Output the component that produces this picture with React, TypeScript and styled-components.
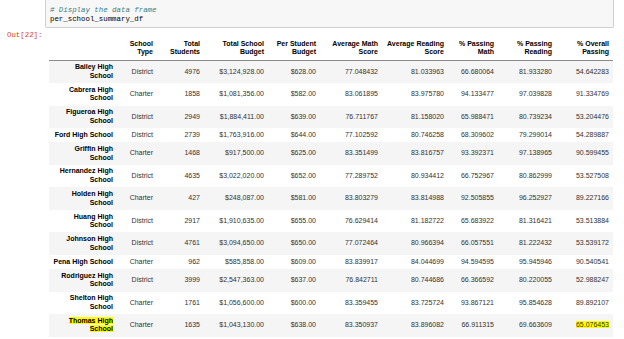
import styled, { createGlobalStyle } from 'styled-components';

const GlobalStyle = createGlobalStyle`
  html, body {
    margin: 0;
    padding: 0;
    background: #ffffff;
  }
`;

type School = {
  name: string;
  type: string;
  students: number;
  budget: string;
  perStudent: string;
  math: string;
  reading: string;
  passMath: string;
  passReading: string;
  overall: string;
  highlight?: boolean;
};

const columns = [
  { label: 'School\nType', width: 40 },
  { label: 'Total\nStudents', width: 47 },
  { label: 'Total School\nBudget', width: 64 },
  { label: 'Per Student\nBudget', width: 52 },
  { label: 'Average Math\nScore', width: 62 },
  { label: 'Average Reading\nScore', width: 66 },
  { label: '% Passing\nMath', width: 50 },
  { label: '% Passing\nReading', width: 58 },
  { label: '% Overall\nPassing', width: 57 },
];

const schools: School[] = [
  { name: 'Bailey High\nSchool', type: 'District', students: 4976, budget: '$3,124,928.00', perStudent: '$628.00', math: '77.048432', reading: '81.033963', passMath: '66.680064', passReading: '81.933280', overall: '54.642283' },
  { name: 'Cabrera High\nSchool', type: 'Charter', students: 1858, budget: '$1,081,356.00', perStudent: '$582.00', math: '83.061895', reading: '83.975780', passMath: '94.133477', passReading: '97.039828', overall: '91.334769' },
  { name: 'Figueroa High\nSchool', type: 'District', students: 2949, budget: '$1,884,411.00', perStudent: '$639.00', math: '76.711767', reading: '81.158020', passMath: '65.988471', passReading: '80.739234', overall: '53.204476' },
  { name: 'Ford High School', type: 'District', students: 2739, budget: '$1,763,916.00', perStudent: '$644.00', math: '77.102592', reading: '80.746258', passMath: '68.309602', passReading: '79.299014', overall: '54.289887' },
  { name: 'Griffin High\nSchool', type: 'Charter', students: 1468, budget: '$917,500.00', perStudent: '$625.00', math: '83.351499', reading: '83.816757', passMath: '93.392371', passReading: '97.138965', overall: '90.599455' },
  { name: 'Hernandez High\nSchool', type: 'District', students: 4635, budget: '$3,022,020.00', perStudent: '$652.00', math: '77.289752', reading: '80.934412', passMath: '66.752967', passReading: '80.862999', overall: '53.527508' },
  { name: 'Holden High\nSchool', type: 'Charter', students: 427, budget: '$248,087.00', perStudent: '$581.00', math: '83.803279', reading: '83.814988', passMath: '92.505855', passReading: '96.252927', overall: '89.227166' },
  { name: 'Huang High\nSchool', type: 'District', students: 2917, budget: '$1,910,635.00', perStudent: '$655.00', math: '76.629414', reading: '81.182722', passMath: '65.683922', passReading: '81.316421', overall: '53.513884' },
  { name: 'Johnson High\nSchool', type: 'District', students: 4761, budget: '$3,094,650.00', perStudent: '$650.00', math: '77.072464', reading: '80.966394', passMath: '66.057551', passReading: '81.222432', overall: '53.539172' },
  { name: 'Pena High School', type: 'Charter', students: 962, budget: '$585,858.00', perStudent: '$609.00', math: '83.839917', reading: '84.044699', passMath: '94.594595', passReading: '95.945946', overall: '90.540541' },
  { name: 'Rodriguez High\nSchool', type: 'District', students: 3999, budget: '$2,547,363.00', perStudent: '$637.00', math: '76.842711', reading: '80.744686', passMath: '66.366592', passReading: '80.220055', overall: '52.988247' },
  { name: 'Shelton High\nSchool', type: 'Charter', students: 1761, budget: '$1,056,600.00', perStudent: '$600.00', math: '83.359455', reading: '83.725724', passMath: '93.867121', passReading: '95.854628', overall: '89.892107' },
  { name: 'Thomas High\nSchool', type: 'Charter', students: 1635, budget: '$1,043,130.00', perStudent: '$638.00', math: '83.350937', reading: '83.896082', passMath: '66.911315', passReading: '69.663609', overall: '65.076453', highlight: true },
];

const Notebook = styled.div`
  width: 624px;
  height: 339px;
  overflow: hidden;
  font-family: 'Liberation Sans', Arial, sans-serif;
`;

const InputArea = styled.div`
  margin: 0 10px 0 45px;
  padding: 5.5px 4px 3px;
  background: #f7f7f7;
  border: 1px solid #cfcfcf;
  border-top: 0;
  border-radius: 0 0 2px 2px;
`;

const CodeLine = styled.div<{ $comment?: boolean }>`
  font-family: 'Liberation Mono', 'DejaVu Sans Mono', monospace;
  font-size: 7.4px;
  line-height: 9px;
  white-space: pre;
  color: ${p => (p.$comment ? '#408080' : '#000000')};
  font-style: ${p => (p.$comment ? 'italic' : 'normal')};
`;

const OutputArea = styled.div`
  display: flex;
  padding-top: 3px;
`;

const Prompt = styled.div`
  width: 49px;
  flex: none;
  padding-left: 7px;
  box-sizing: border-box;
  font-family: 'Liberation Mono', 'DejaVu Sans Mono', monospace;
  font-size: 7.4px;
  line-height: 9px;
  color: #d84315;
`;

const Table = styled.table`
  margin-top: 6.5px;
  border-collapse: collapse;
  border-spacing: 0;
  table-layout: fixed;
  width: 563.5px;
  font-size: 7px;
  line-height: 8.6px;
  color: #000000;
`;

const HeadCell = styled.th`
  padding: 2.7px 3.5px;
  text-align: right;
  vertical-align: bottom;
  font-weight: bold;
  white-space: pre;
  border-bottom: 1px solid #8c8c8c;
`;

const Row = styled.tr`
  &:nth-child(odd) {
    background: #f5f5f5;
  }
`;

const IndexCell = styled.th`
  padding: 2.7px 3.5px;
  text-align: right;
  vertical-align: middle;
  font-weight: bold;
  white-space: pre;
`;

const Cell = styled.td`
  padding: 2.7px 3.5px;
  text-align: right;
  vertical-align: middle;
  color: #333333;
  white-space: nowrap;
`;

const Mark = styled.span`
  background: #ffff00;
  box-decoration-break: clone;
  -webkit-box-decoration-break: clone;
`;

export default function App() {
  return (
    <Notebook>
      <GlobalStyle />
      <InputArea>
        <CodeLine $comment># Display the data frame</CodeLine>
        <CodeLine>per_school_summary_df</CodeLine>
      </InputArea>
      <OutputArea>
        <Prompt>Out[22]:</Prompt>
        <Table>
          <colgroup>
            <col style={{ width: 67.5 }} />
            {columns.map(c => (
              <col key={c.label} style={{ width: c.width }} />
            ))}
          </colgroup>
          <thead>
            <tr>
              <HeadCell />
              {columns.map(c => (
                <HeadCell key={c.label}>{c.label}</HeadCell>
              ))}
            </tr>
          </thead>
          <tbody>
            {schools.map(s => (
              <Row key={s.name}>
                <IndexCell>{s.highlight ? <Mark>{s.name}</Mark> : s.name}</IndexCell>
                <Cell>{s.type}</Cell>
                <Cell>{s.students}</Cell>
                <Cell>{s.budget}</Cell>
                <Cell>{s.perStudent}</Cell>
                <Cell>{s.math}</Cell>
                <Cell>{s.reading}</Cell>
                <Cell>{s.passMath}</Cell>
                <Cell>{s.passReading}</Cell>
                <Cell>{s.highlight ? <Mark>{s.overall}</Mark> : s.overall}</Cell>
              </Row>
            ))}
          </tbody>
        </Table>
      </OutputArea>
    </Notebook>
  );
}
